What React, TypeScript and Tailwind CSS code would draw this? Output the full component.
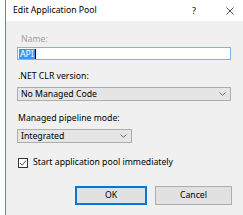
import React from "react";

function Chevron() {
  return (
    <svg width="7" height="4" viewBox="0 0 7 4" className="shrink-0">
      <path d="M0.5 0.5 L3.5 3.3 L6.5 0.5" fill="none" stroke="#606060" strokeWidth="0.9" />
    </svg>
  );
}

export default function App() {
  return (
    <div
      className="w-[243px] h-[215px] bg-white flex overflow-hidden text-[8.7px] text-black"
      style={{ fontFamily: '"Noto Sans", "Liberation Sans", sans-serif' }}
    >
      <div className="ml-[5px] w-[240px] shrink-0 border-l border-[#3d8fe0] flex flex-col">
        <div className="h-[21px] bg-white flex items-center pl-[7px] pr-[11px] shrink-0">
          <span className="flex-1 leading-none">Edit Application Pool</span>
          <span className="leading-none mr-[30px] text-[9px]">?</span>
          <svg width="8" height="8" viewBox="0 0 8 8">
            <path d="M0.5 0.5 L7.5 7.5 M7.5 0.5 L0.5 7.5" stroke="#222" strokeWidth="0.8" />
          </svg>
        </div>
        <div className="flex-1 bg-[#f0f0f0] flex flex-col pl-[11px]">
          <div className="mt-[12px] h-[12px] leading-[12px] pl-[4px] text-[#a0a0a0]">Name:</div>
          <div className="mt-[2px] w-[214px] h-[13px] bg-white border border-[#7ab4ea] flex items-center pl-[1px]">
            <span className="bg-[#3399ff] text-white leading-[10px] h-[10px] px-[1px]">API</span>
            <span className="w-px h-[10px] bg-black" />
          </div>
          <div className="mt-[10px] h-[12px] leading-[12px] pl-[1px]">.NET CLR version:</div>
          <div className="mt-[5px] w-[214px] h-[14px] bg-[#e5e5e5] border border-[#adadad] flex items-center pl-[3px] pr-[4px]">
            <span className="flex-1 leading-none">No Managed Code</span>
            <Chevron />
          </div>
          <div className="mt-[11px] h-[12px] leading-[12px] pl-[1px]">Managed pipeline mode:</div>
          <div className="mt-[5px] w-[115px] h-[14px] bg-[#e5e5e5] border border-[#adadad] flex items-center pl-[3px] pr-[4px]">
            <span className="flex-1 leading-none">Integrated</span>
            <Chevron />
          </div>
          <div className="mt-[14px] flex items-center h-[11px] pl-[1px]">
            <div className="w-[10px] h-[10px] border border-[#333] bg-white flex items-center justify-center">
              <svg width="8" height="8" viewBox="0 0 8 8">
                <path d="M1 4 L3.2 6.2 L7 1.5" fill="none" stroke="#444" strokeWidth="0.9" />
              </svg>
            </div>
            <span className="ml-[5px] leading-none">Start application pool immediately</span>
          </div>
          <div className="mt-[18px] flex pl-[58px] gap-[8px]">
            <div className="w-[72px] h-[19px] bg-[#e1e1e1] border-2 border-[#0078d7] flex items-center justify-center">
              OK
            </div>
            <div className="w-[77px] h-[19px] bg-[#e1e1e1] border border-[#adadad] flex items-center justify-center">
              Cancel
            </div>
          </div>
        </div>
      </div>
    </div>
  );
}
